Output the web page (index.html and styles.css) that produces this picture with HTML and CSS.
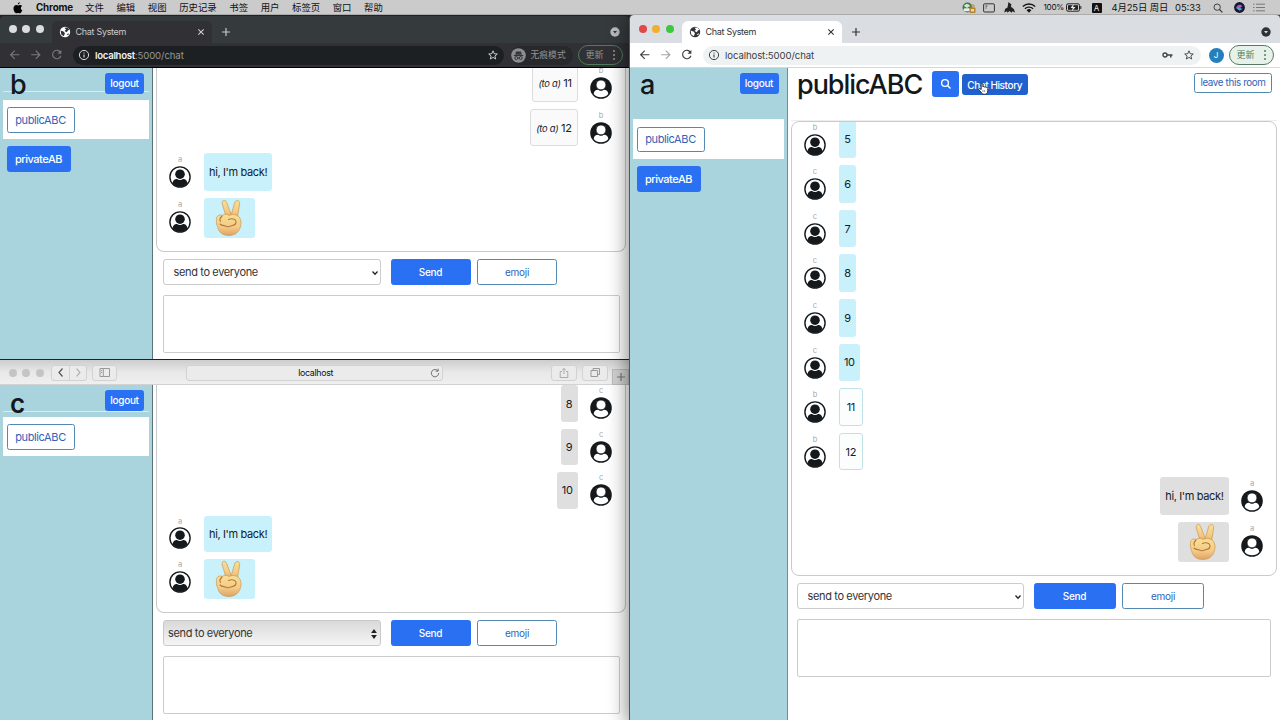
FILE: index.html
```html
<!DOCTYPE html>
<html lang="zh-CN">
<head>
<meta charset="utf-8">
<title>Chat System</title>
<link rel="stylesheet" href="styles.css">
</head>
<body>
<svg class="defs" width="0" height="0" aria-hidden="true">
  <defs>
    <linearGradient id="skin" x1="0" y1="0" x2="0" y2="1"><stop offset="0" stop-color="#f8df94"/><stop offset=".6" stop-color="#f3cb86"/><stop offset="1" stop-color="#e0a264"/></linearGradient>
    <symbol id="them" viewBox="0 0 22 22"><circle cx="11" cy="11" r="10.1" fill="#fff" stroke="#15191c" stroke-width="1.4"/><circle cx="11" cy="8.2" r="4.8" fill="#15191c"/><path d="M3.6 17.3C4 13.8 6 12.9 8 13c1.6 1.3 4.4 1.3 6 0 2-.1 4 .8 4.400 4.300C16.500 19.700 14 21 11 21s-5.500-1.300-7.400-3.700z" fill="#15191c"/></symbol>
    <symbol id="me" viewBox="0 0 22 22"><circle cx="11" cy="11" r="10.800" fill="#15191c"/><path d="M3.700 17c.300-3 2-4.200 4.300-4.200 1.800 1.200 4.200 1.200 6 0 2.300 0 4 1.200 4.300 4.200-1.800 2.100-4.300 3.300-7.300 3.300S5.500 19.100 3.700 17z" fill="#fff"/><circle cx="11" cy="7.900" r="5" fill="#fff" stroke="#15191c" stroke-width=".9"/></symbol>
    <symbol id="victory" viewBox="0 0 28 38"><g stroke="#cf9650" stroke-width=".7" stroke-linejoin="round"><path d="M11.500 19 7.300 5C6.200 1.200 10.300-.2 11.700 3.600L16.800 17z" fill="url(#skin)"/><path d="M15.500 18 19.600 4C20.500.2 25.200.9 24.600 4.800L22.300 20z" fill="url(#skin)"/><path d="M1.500 20.500c-.6-3.500 3-5.500 5.800-4 2-1.800 5.200-1.500 6.700 0 2.500-1.500 6.500-1.300 9 .5 3.500 2.500 3.700 8 1.800 12.500C23 34 19 36.500 13.700 36.500 8 36.500 4 33.500 3 29c-.5-2.500-2-3-1.500-8.500z" fill="url(#skin)"/></g><path d="M7 17c-1.500 1.500-2.700 4-1.500 5.500M5 25c2.500 2.300 4.500 1 6.500 2.500 2 1 4-.5 6-1M13.500 20.500c3.500-1.500 7-.5 7.500 2 .3 2-1.500 3.500-3.500 4" fill="none" stroke="#b8763a" stroke-width="1.100" stroke-linecap="round"/></symbol>
    <symbol id="globe" viewBox="0 0 12 12"><circle cx="6" cy="6" r="5.200" fill="currentColor"/><path d="M1.600 4.600 4.900 5.800l1 1.700L4.800 10.300 2.300 8.500zM5.300 1.700l3.200-.2 2 2.200-1.700.8-.9 1.800L5.500 5l1.600-1.400zM7.600 8.200l2.300-1-.6 2z" class="globe-land"/></symbol>
    <symbol id="back" viewBox="0 0 12 12"><path d="M10.800 6H1.700M6 1.700 1.700 6 6 10.300" fill="none" stroke="currentColor" stroke-width="1.200"/></symbol>
    <symbol id="forward" viewBox="0 0 12 12"><path d="M1.200 6h9.100M6 1.700 10.300 6 6 10.300" fill="none" stroke="currentColor" stroke-width="1.200"/></symbol>
    <symbol id="reload" viewBox="0 0 12 12"><path d="M10 3.700A4.400 4.400 0 1 0 10.300 7" fill="none" stroke="currentColor" stroke-width="1.200"/><path d="M10.800 1v4h-4z" fill="currentColor"/></symbol>
    <symbol id="info" viewBox="0 0 12 12"><circle cx="6" cy="6" r="4.600" fill="none" stroke="currentColor" stroke-width="1"/><path d="M6 5.400v3.200M6 3.400v1.100" stroke="currentColor" stroke-width="1.100"/></symbol>
    <symbol id="star" viewBox="0 0 12 12"><path d="m6 1.800 1.200 2.900 3.100.3-2.400 2 .8 3L6 8.400l-2.700 1.600.8-3-2.400-2 3.100-.3z" fill="none" stroke="currentColor" stroke-width=".9"/></symbol>
    <symbol id="close" viewBox="0 0 8 8"><path d="m1.300 1.300 5.400 5.400m0-5.400L1.300 6.700" stroke="currentColor" stroke-width="1.100"/></symbol>
    <symbol id="plus" viewBox="0 0 10 10"><path d="M5 1v8M1 5h8" stroke="currentColor" stroke-width="1.200"/></symbol>
    <symbol id="tabs" viewBox="0 0 10 10"><circle cx="5" cy="5" r="4.700" fill="currentColor"/><path d="M3 4h4L5 6.600z" class="tabs-arrow"/></symbol>
    <symbol id="search" viewBox="0 0 12 12"><circle cx="5" cy="5" r="3.400" fill="none" stroke="currentColor" stroke-width="1.400"/><path d="m7.500 7.500 3 3" stroke="currentColor" stroke-width="1.500"/></symbol>
    <symbol id="chevron" viewBox="0 0 8 8"><path d="m1.500 2.500 2.500 2.700 2.500-2.700" fill="none" stroke="#222" stroke-width="1.300"/></symbol>
  </defs>
</svg>

<header class="menubar">
  <svg class="apple" viewBox="0 0 10 12"><path d="M6.800.3c.1 1.200-.9 2.300-2 2.300C4.700 1.500 5.700.4 6.800.3zM8.900 8.900C8.300 10.300 7.600 11.300 6.800 11.300c-.7 0-.9-.4-1.700-.4s-1.100.4-1.700.4C2 11.300.5 8.800.5 6.500c0-2.200 1.300-3.400 2.700-3.400.8 0 1.400.5 1.900.5S6.400 3 7.400 3.100c.6 0 1.300.4 1.700 1C7.300 5.200 7.500 7.800 9.500 8.300z"/></svg>
  <nav class="menus"><b>Chrome</b><span>文件</span><span>编辑</span><span>视图</span><span>历史记录</span><span>书签</span><span>用户</span><span>标签页</span><span>窗口</span><span>帮助</span></nav>
  <div class="status">
    <svg class="s-vpn" viewBox="0 0 14 12"><circle cx="5.500" cy="5.500" r="5" fill="#3f7b4c"/><path d="M2 4c2-3 5-2 6 0L5 6z" fill="#d6e7d6"/><rect x="1.500" y="6.300" width="7" height="3" rx="1.500" fill="#e9efe7"/><rect x="7.500" y="5.500" width="6" height="5.500" rx="1" fill="#b9822c"/><path d="M9 5.500V4c0-1.700 3-1.700 3 0v1.500" fill="none" stroke="#b9822c"/><rect x="9" y="7" width="3" height="2.500" fill="#e8d6ae"/></svg>
    <svg class="s-card" viewBox="0 0 12 10"><rect x=".6" y=".8" width="10.800" height="8.200" rx="1" fill="none" stroke="#333"/><path d="M2.500 3h1.800M2.500 5h1" stroke="#333"/></svg>
    <svg class="s-bird" viewBox="0 0 11 11"><path d="M4.500 0 7.500 2.500 6.800 4.500 10 7.200l1 3.300-2.500-1.300-1 1.500L5.500 9 3.500 10.800 3 9.300.3 10.600 1 7l2.500-1.500z" fill="#222"/></svg>
    <svg class="s-wifi" viewBox="0 0 14 10"><path d="M.8 3.500a9 9 0 0 1 12.400 0M2.900 5.700a6 6 0 0 1 8.200 0" fill="none" stroke="#151515" stroke-width="1.400"/><path d="M4.600 7.300a3.400 3.400 0 0 1 4.800 0L7 9.800z" fill="#151515"/></svg>
    <span class="s-pct">100%</span>
    <svg class="s-batt" viewBox="0 0 16 9"><rect x=".5" y=".8" width="13" height="7.400" rx="1.500" fill="none" stroke="#222"/><rect x="2" y="2.200" width="10" height="4.600" fill="#222"/><path d="M7.800.8 4.500 5h2.200l-.8 3.200L9.500 4H7.200z" fill="#e8e8e8"/><path d="M14.800 3v3" stroke="#222"/></svg>
    <span class="s-ime">A</span>
    <span class="s-date">4月25日 周日</span>
    <span class="s-time">05:33</span>
    <svg class="s-search" viewBox="0 0 12 12"><circle cx="5" cy="5" r="3.800" fill="none" stroke="#333" stroke-width="1.100"/><path d="m7.800 7.800 3.500 3.500" stroke="#333" stroke-width="1.300"/></svg>
    <svg class="s-siri" viewBox="0 0 11 11"><circle cx="5.500" cy="5.500" r="5.400" fill="#17172f"/><path d="M2 6C3 2.500 7 1.500 8.500 4.500 7 4 6 7 5 7.500z" fill="#b259bd"/><path d="M2.200 6c2-1 3.500-.5 6.400 1L5.500 8.700z" fill="#49a7da"/></svg>
    <svg class="s-list" viewBox="0 0 12 9"><path d="M0 1.200h1.500M3 1.200h9M0 4.500h1.500M3 4.500h9M0 7.800h1.500M3 7.800h9" stroke="#777"/></svg>
  </div>
</header>

<section class="window win-b">
  <div class="tabstrip dark">
    <i class="dots"><i></i><i></i><i></i></i>
    <div class="tab"><svg class="i12"><use href="#globe"/></svg><span>Chat System</span><svg class="i8"><use href="#close"/></svg></div>
    <svg class="newtab"><use href="#plus"/></svg>
    <svg class="tabmenu"><use href="#tabs"/></svg>
  </div>
  <div class="toolbar dark">
    <svg class="nav dim"><use href="#back"/></svg><svg class="nav dim"><use href="#forward"/></svg><svg class="nav dim"><use href="#reload"/></svg>
    <div class="address"><svg class="i12"><use href="#info"/></svg><span class="url"><b>localhost</b>:5000/chat</span><svg class="i12"><use href="#star"/></svg></div>
    <div class="incognito"><svg viewBox="0 0 15 15"><circle cx="7.500" cy="7.500" r="7.300" fill="#8c8d8f"/><path d="M5 3.500h5l.8 3.200H4.200zM2.800 7h9.400v1H2.800z" fill="#35363a"/><circle cx="5.300" cy="10" r="1.500" fill="none" stroke="#35363a"/><circle cx="9.700" cy="10" r="1.500" fill="none" stroke="#35363a"/><path d="M6.800 10h1.400" stroke="#35363a"/></svg><span>无痕模式</span></div>
    <div class="update"><span>更新</span><i class="kebab"></i></div>
  </div>
  <div class="app">
    <aside class="sidebar">
      <div class="who"><h2>b</h2><button class="btn sm">logout</button></div>
      <div class="room active"><button class="btn outline">publicABC</button></div>
      <div class="room"><button class="btn">privateAB</button></div>
    </aside>
    <main class="main">
      <div class="chat">
        <div class="msg mine"><div class="user"><span>b</span><svg><use href="#me"/></svg></div><div class="bubble private"><em>(to a)</em> 11</div></div>
        <div class="msg mine"><div class="user"><span>b</span><svg><use href="#me"/></svg></div><div class="bubble private"><em>(to a)</em> 12</div></div>
        <div class="msg"><div class="user"><span>a</span><svg><use href="#them"/></svg></div><div class="bubble">hi, I'm back!</div></div>
        <div class="msg emo"><div class="user"><span>a</span><svg><use href="#them"/></svg></div><div class="bubble"><svg class="hand"><use href="#victory"/></svg></div></div>
      </div>
      <div class="compose">
        <div class="controls"><div class="select"><span>send to everyone</span><svg class="i8"><use href="#chevron"/></svg></div><button class="btn act">Send</button><button class="btn outline act">emoji</button></div>
        <div class="textarea"></div>
      </div>
    </main>
  </div>
</section>

<section class="window win-c">
  <div class="safari">
    <i class="dots"><i></i><i></i><i></i></i>
    <div class="pair"><svg viewBox="0 0 17 15"><path d="M10.500 3.500 7 7.500l3.500 4" fill="none" stroke="#555" stroke-width="1.200"/></svg><svg viewBox="0 0 17 15"><path d="M7 3.500l3.500 4-3.500 4" fill="none" stroke="#aaa" stroke-width="1.200"/></svg></div>
    <div class="sbtn"><svg width="12" height="11" viewBox="0 0 12 11"><path d="M1 1.500h9.500v8H1zM4.300 1.500v8M2 3.500h1.200M2 5.500h1.200" fill="none" stroke="#999"/></svg></div>
    <div class="saddr"><span>localhost</span><svg class="i10" viewBox="0 0 12 12"><path d="M9.500 3.500A4.400 4.400 0 1 0 10.400 6M9.800.8v3H6.700" fill="none" stroke="#666" stroke-width="1.100"/></svg></div>
    <div class="sbtn share"><svg width="12" height="12" viewBox="0 0 12 12"><path d="M4 4.500H2.200v6h7.600v-6H8M6 7V1.500M4.200 3.200 6 1.400l1.800 1.800" fill="none" stroke="#aaa"/></svg></div>
    <div class="sbtn over"><svg width="11" height="11" viewBox="0 0 11 11"><path d="M1 3.500h6.500v6H1zM3 3.500v-2h6.500v6h-2" fill="none" stroke="#999"/></svg></div>
    <div class="splus"><svg class="i10"><use href="#plus"/></svg></div>
  </div>
  <div class="app">
    <aside class="sidebar">
      <div class="who"><h2>c</h2><button class="btn sm">logout</button></div>
      <div class="room active"><button class="btn outline">publicABC</button></div>
    </aside>
    <main class="main">
      <div class="chat">
        <div class="msg mine"><div class="user"><span>c</span><svg><use href="#me"/></svg></div><div class="bubble">8</div></div>
        <div class="msg mine"><div class="user"><span>c</span><svg><use href="#me"/></svg></div><div class="bubble">9</div></div>
        <div class="msg mine"><div class="user"><span>c</span><svg><use href="#me"/></svg></div><div class="bubble">10</div></div>
        <div class="msg"><div class="user"><span>a</span><svg><use href="#them"/></svg></div><div class="bubble">hi, I'm back!</div></div>
        <div class="msg emo"><div class="user"><span>a</span><svg><use href="#them"/></svg></div><div class="bubble"><svg class="hand"><use href="#victory"/></svg></div></div>
      </div>
      <div class="compose">
        <div class="controls"><div class="select native"><span>send to everyone</span><svg class="i8 updown" viewBox="0 0 8 10"><path d="M4 0 6.900 4H1.100zM4 10 1.100 6h5.800z" fill="#222"/></svg></div><button class="btn act">Send</button><button class="btn outline act">emoji</button></div>
        <div class="textarea"></div>
      </div>
    </main>
  </div>
</section>

<section class="window win-a">
  <div class="tabstrip light">
    <i class="dots color"><i></i><i></i><i></i></i>
    <div class="tab"><svg class="i12"><use href="#globe"/></svg><span>Chat System</span><svg class="i8"><use href="#close"/></svg></div>
    <svg class="newtab"><use href="#plus"/></svg>
    <svg class="tabmenu"><use href="#tabs"/></svg>
  </div>
  <div class="toolbar light">
    <svg class="nav"><use href="#back"/></svg><svg class="nav dim"><use href="#forward"/></svg><svg class="nav"><use href="#reload"/></svg>
    <div class="address"><svg class="i12"><use href="#info"/></svg><span class="url">localhost:5000/chat</span><svg class="key" viewBox="0 0 11 8"><circle cx="3" cy="4" r="2" fill="none" stroke="#444" stroke-width="1.400"/><path d="M5 4h5.500M8.800 4v2.500" stroke="#444" stroke-width="1.500"/></svg><svg class="i12"><use href="#star"/></svg></div>
    <div class="profile">J</div>
    <div class="update"><span>更新</span><i class="kebab"></i></div>
  </div>
  <div class="app">
    <aside class="sidebar">
      <div class="who"><h2>a</h2><button class="btn sm">logout</button></div>
      <div class="room active"><button class="btn outline">publicABC</button></div>
      <div class="room"><button class="btn">privateAB</button></div>
    </aside>
    <main class="main">
      <div class="roomhead">
        <h1>publicABC</h1>
        <button class="btn find"><svg class="i12"><use href="#search"/></svg></button>
        <button class="btn sm history">Chat History<svg class="cursor" viewBox="0 0 11 13"><path d="M3.200 7.500V2c0-1.300 1.700-1.300 1.700 0v3c.3-.7 1.500-.6 1.700.2.400-.6 1.400-.4 1.600.3.500-.5 1.600-.2 1.600.8v2.500c0 2-1 3.500-3 3.500-2.200 0-2.900-.8-3.800-2.200L.9 8c-.7-1.100.6-1.900 1.300-1.200z" fill="#fff" stroke="#222" stroke-width=".9"/><path d="M5 8v2M6.600 8v2" stroke="#555" stroke-width=".6"/></svg></button>
        <button class="btn sm outline leave">leave this room</button>
      </div>
      <div class="chat">
        <div class="msg"><div class="user"><span>b</span><svg><use href="#them"/></svg></div><div class="bubble">5</div></div>
        <div class="msg"><div class="user"><span>c</span><svg><use href="#them"/></svg></div><div class="bubble">6</div></div>
        <div class="msg"><div class="user"><span>c</span><svg><use href="#them"/></svg></div><div class="bubble">7</div></div>
        <div class="msg"><div class="user"><span>c</span><svg><use href="#them"/></svg></div><div class="bubble">8</div></div>
        <div class="msg"><div class="user"><span>c</span><svg><use href="#them"/></svg></div><div class="bubble">9</div></div>
        <div class="msg"><div class="user"><span>c</span><svg><use href="#them"/></svg></div><div class="bubble">10</div></div>
        <div class="msg"><div class="user"><span>b</span><svg><use href="#them"/></svg></div><div class="bubble private">11</div></div>
        <div class="msg"><div class="user"><span>b</span><svg><use href="#them"/></svg></div><div class="bubble private">12</div></div>
        <div class="msg mine"><div class="user"><span>a</span><svg><use href="#me"/></svg></div><div class="bubble">hi, I'm back!</div></div>
        <div class="msg mine emo"><div class="user"><span>a</span><svg><use href="#me"/></svg></div><div class="bubble"><svg class="hand"><use href="#victory"/></svg></div></div>
      </div>
      <div class="compose">
        <div class="controls"><div class="select"><span>send to everyone</span><svg class="i8"><use href="#chevron"/></svg></div><button class="btn act">Send</button><button class="btn outline act">emoji</button></div>
        <div class="textarea"></div>
      </div>
    </main>
  </div>
</section>
</body>
</html>
```
FILE: styles.css
```css
* { box-sizing: border-box; }
body { margin: 0; width: 1280px; height: 720px; overflow: hidden; position: relative; background: #222; color: #111; font: 11px/1.2 Inter, "Noto Sans CJK SC", sans-serif; }
h1, h2 { margin: 0; font-weight: 500; font-size: 27px; line-height: 30px; color: #13181b; }
svg { display: block; flex: none; }
.defs { position: absolute; }
.i8 { width: 8px; height: 8px; }
.i10 { width: 10px; height: 10px; }
.i12 { width: 12px; height: 12px; }

/* menu bar */
.menubar { position: relative; z-index: 5; height: 15px; background: #cbcbcb; display: flex; align-items: center; padding: 1px 15.500px 0 13px; font-size: 9.400px; border-bottom: 1px solid #aaa; }
.apple { width: 10px; height: 12px; }
.menus { display: flex; gap: 12.600px; margin-left: 13px; white-space: nowrap; }
.menus b { width: 36.500px; font-size: 9.800px; letter-spacing: -.15px; }
.status { margin-left: auto; display: flex; align-items: center; white-space: nowrap; }
.s-vpn { width: 14px; height: 12px; margin-right: 7px; }
.s-card { width: 12px; height: 10px; margin-right: 9px; }
.s-bird { width: 11px; height: 11px; margin-right: 7px; }
.s-wifi { width: 14px; height: 10px; margin-right: 8px; }
.s-pct { width: 22px; font-size: 8.200px; letter-spacing: -.3px; }
.s-batt { width: 16px; height: 9px; margin-right: 10px; }
.s-ime { width: 10px; height: 10px; margin-right: 10px; border-radius: 1px; background: #111; color: #eee; font-size: 8px; line-height: 10px; text-align: center; }
.s-date { width: 63.500px; letter-spacing: -.1px; }
.s-time { width: 37.500px; }
.s-search { width: 10px; height: 10px; margin-right: 11px; }
.s-siri { width: 11px; height: 11px; margin-right: 8px; }
.s-list { width: 12px; height: 9px; }

/* windows */
.window { position: absolute; overflow: hidden; display: flex; flex-direction: column; }
.win-b { left: 0; top: 16px; width: 629px; height: 343px; border-radius: 4px 4px 0 0; }
.win-c { left: 0; top: 360px; width: 629px; height: 360px; }
.win-a { left: 630px; top: 15px; width: 650px; height: 705px; border-radius: 4px 4px 0 0; box-shadow: 0 0 0 1px #555, 0 3px 20px 2px rgba(0,0,0,.5); }

.dots { display: flex; gap: 5.300px; }
.dots i { width: 8px; height: 8px; border-radius: 50%; background: #dadcde; }
.dots.color i { background: #e0484a; }
.dots.color i:nth-child(2) { background: #eeb02e; }
.dots.color i:nth-child(3) { background: #3cc83f; }
.tabstrip { height: 27px; flex: none; display: flex; padding: 5px 9.500px 0 9px; }
.tabstrip .dots { margin-top: 4px; }
.win-a .tabstrip { height: 28px; padding-top: 6px; }
.tabstrip.dark { background: #353a3c; color: #c8cacc; }
.tabstrip.light { background: #dadde1; color: #303336; }
.tab { width: 160px; margin-left: 8px; display: flex; align-items: center; padding: 0 7px 0 7px; border-radius: 6px 6px 0 0; font-size: 9px; }
.tab span { margin-left: 5px; flex: 1; letter-spacing: -.35px; word-spacing: .3px; }
.dark .tab { background: #303035; }
.light .tab { background: #fff; }
.dark .tab .i12 { color: #fff; }
.light .i12 { --land: #fff; }
.dark .i12 { --land: #303035; }
.globe-land { fill: var(--land); }
.newtab { width: 10px; height: 10px; margin: 6px 0 0 9.500px; }
.tabmenu { width: 10px; height: 10px; margin: 6px 0 0 auto; }
.dark .tabmenu { color: #b9bbbd; --arrow: #303336; }
.light .tabmenu { --arrow: #dadde1; }
.tabs-arrow { fill: var(--arrow); }
.toolbar { height: 25px; flex: none; display: flex; align-items: center; padding: 0 6px 0 9px; }
.toolbar.dark { background: #303035; color: #d8dadc; border-bottom: 1px solid #000; }
.toolbar.light { background: #fff; color: #3c4043; border-bottom: 1px solid #d5d7d9; }
.nav { width: 11.500px; height: 11.500px; margin-right: 9.700px; }
.dark .dim { color: #77797c; }
.light .dim { color: #a2a5a8; }
.address { flex: 1; height: 19px; border-radius: 10px; display: flex; align-items: center; padding: 0 5.500px; }
.dark .address { background: #1d2022; }
.light .address { background: #eff2f3; }
.url { flex: 1; padding-top: 1px; margin-left: 5px; font-size: 9.600px; letter-spacing: -.1px; }
.dark .url { color: #94979a; }
.url b { color: #f2f2f2; font-weight: 600; letter-spacing: -.3px; }
.key { width: 11px; height: 8px; margin-right: 10px; }
.incognito { display: flex; align-items: center; width: 61.500px; height: 19px; margin: 0 5px 0 7px; background: #28292c; border-radius: 10px; color: #8f9194; font-size: 8.800px; white-space: nowrap; }
.incognito svg { width: 15px; height: 15px; margin: 0 4.500px 0 0; }
.profile { width: 15px; height: 15px; margin: 0 5px 0 8px; border-radius: 50%; background: #267fbd; color: #fff; font-size: 8px; line-height: 15px; text-align: center; }
.update { width: 45.500px; height: 20px; border: 1px solid #4f7a5b; border-radius: 10px; display: flex; align-items: center; justify-content: space-between; padding: 0 7px; font-size: 9px; color: #8c9c91; }
.light .update { background: #e6f2e9; border-color: #54795f; color: #527c62; }
.kebab { width: 2px; height: 2px; border-radius: 50%; background: currentColor; box-shadow: 0 -4px, 0 4px; }

/* safari toolbar */
.safari { height: 25px; flex: none; display: flex; align-items: center; padding: 1px 0 0 9px; background: linear-gradient(#cdcdcd, #e8e8e8 50%, #efefef); border-bottom: 1px solid #d2d2d2; }
.safari .dots i { background: #c4c4c4; }
.pair, .sbtn, .saddr { height: 16px; border: 1px solid #d2d2d2; border-radius: 3px; background: #ebebeb; display: flex; align-items: center; justify-content: center; }
.pair { width: 36px; margin-left: 7px; }
.pair svg { width: 17px; height: 15px; }
.pair svg + svg { border-left: 1px solid #d2d2d2; }
.sbtn { width: 26px; margin-left: 5px; }
.saddr { width: 258px; margin-left: 69px; padding-right: 2px; }
.saddr span { flex: 1; text-align: center; padding: 1px 0 0 14px; font-size: 8.800px; letter-spacing: -.3px; }
.share { margin-left: 108.500px; }
.splus { width: 17px; height: 16px; margin: 8px 0 0 4px; background: #d2d2d2; border: 1px solid #bbb; display: flex; align-items: center; justify-content: center; color: #777; }

/* chat application */
.app { flex: 1; min-height: 0; display: flex; background: #fff; }
.sidebar { width: 153px; flex: none; background: #a9d4de; border-right: 1px solid #5b7379; padding: 0 3px; }
.win-a .sidebar { width: 157.500px; border-right: 1.500px solid #6d8f97; }
.who { height: 24px; display: flex; justify-content: space-between; padding: 5px 5px 0 7px; border-bottom: 1px solid #d3edf2; margin-bottom: 8px; }
.who h2 { margin-top: -3px; }
.win-c .who { height: 27px; margin-bottom: 5px; }
.win-c .who h2 { font-weight: 600; font-size: 26px; margin-top: -1px; }
.win-a .who { height: 51px; border: 0; margin: 0; padding-right: 5px; }
.room { height: 39px; padding: 7px 3.500px; width: 146px; }
.room.active { background: #fff; }
.win-a .room { width: 150.500px; height: 39.500px; padding-top: 7.500px; }
.btn { height: 25.500px; padding: 1px 8px 0; border: 1px solid #2a70f3; border-radius: 2.500px; background: #2a70f3; color: #fff; font: 500 11px/1 Inter, sans-serif; letter-spacing: -.25px; white-space: nowrap; display: flex; align-items: center; justify-content: center; flex: none; }
.btn.outline { background: #fff; border-color: #5288b4; color: #2f62b8; font-weight: 400; }
.room .btn { width: 64px; padding: 1px 0 0; letter-spacing: -.45px; }
.room .btn.outline { width: 68px; letter-spacing: -.38px; }
.btn.sm { height: 20.500px; font-size: 10px; letter-spacing: -.3px; padding: 0; }
.who .btn { width: 39px; }
.main { flex: 1; min-width: 0; display: flex; flex-direction: column; padding: 0 3.500px 0 3px; background: #fff; }
.win-a .main { padding: 0 3.500px; }
.roomhead { height: 53px; flex: none; display: flex; padding: 3px 4.500px 0 6px; border-bottom: 1px solid #eee; }
.roomhead h1 { width: 125px; font-size: 27px; letter-spacing: -1.050px; margin-top: -1px; }
.find { width: 27px; margin: 0 3px 0 10px; padding: 0; }
.roomhead .history { width: 65.500px; margin-top: 3px; padding-top: 1px; position: relative; background: #2160cf; border-color: #2160cf; letter-spacing: -.4px; }
.cursor { position: absolute; left: 15px; top: 7px; width: 11px; height: 13px; }
.roomhead .leave { width: 78px; margin: 1.500px 0 0 auto; padding-top: 1px; font-size: 9.800px; letter-spacing: -.35px; }
.chat { flex: 1; min-height: 0; overflow: hidden; display: flex; flex-direction: column; justify-content: flex-end; gap: 7px; padding: 0 12px 13px; border: 1.500px solid #c9cacb; border-top: 0; border-radius: 0 0 8px 8px; }
.win-a .chat { border: 1.500px solid #c9cacb; border-radius: 8px; }
.msg { height: 37.600px; flex: none; display: flex; gap: 13px; }
.win-c .msg { height: 36.400px; }
.win-c .msg.emo, .msg.emo { height: 40px; }
.msg.mine { flex-direction: row-reverse; padding-right: .4px; gap: 12.600px; }
.user { width: 22px; display: flex; flex-direction: column; align-items: center; font-size: 7.500px; line-height: 13px; color: #a5a8aa; }
.win-c .user { line-height: 11.700px; }
.user svg { width: 22px; height: 22px; }
.bubble { padding: 1px 5px 0; min-width: 17px; justify-content: center; border-radius: 3px; background: #c8f1fc; color: #142027; display: flex; align-items: center; white-space: pre; letter-spacing: -.36px; }
.mine .bubble { background: #dfdfdf; }
.bubble.private { padding: 1px 5.500px 0; min-width: 23.500px; border: 1px solid #bfe2e8; background: #fcfefe; }
.mine .bubble.private { padding: 1px 5px 0; border-color: #dcdcdc; background: #fafafa; }
.bubble em { font-size: 9.300px; letter-spacing: -.25px; }
.emo .bubble { width: 51px; padding: 0 2px 0 1px; }
.hand { width: 28px; height: 38px; }
.compose { flex: none; padding: 7px 6px 6.500px 7px; }
.win-a .compose { padding: 7px 6px 43.500px; }
.controls { display: flex; gap: 6.500px; margin-bottom: 10px; }
.select { width: 218px; height: 26px; margin-right: 3px; border: 1px solid #ccc; border-radius: 3px; display: flex; align-items: center; justify-content: space-between; padding: 1px 1px 0 9.500px; color: #333; letter-spacing: -.36px; }
.win-a .select { width: 227px; }
.select.native { background: linear-gradient(#d9d9d9, #f5f5f5); padding-left: 4px; padding-right: 2px; border: 1.500px solid #c9c9c9; }
.updown { height: 10px; }
.act { width: 80px; padding-top: 0; font-size: 10px; }
.win-a .act { width: 82px; }
.textarea { height: 57.500px; border: 1px solid #ccc; border-radius: 2px; }
```
